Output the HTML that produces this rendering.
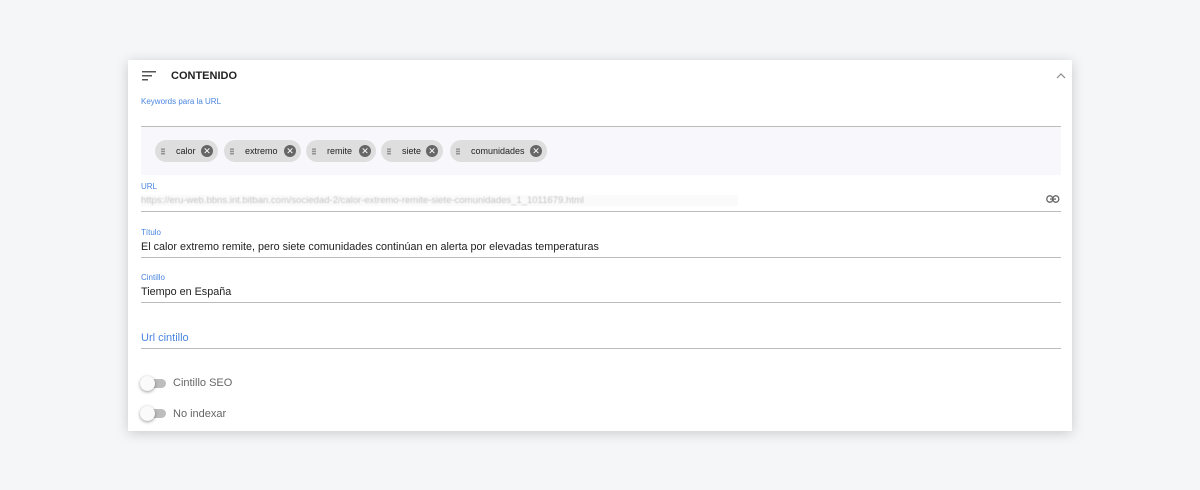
<!DOCTYPE html><html><head><style>
body{margin:0;width:1200px;height:490px;background:#f5f6f8;font-family:"Liberation Sans",sans-serif;position:relative;overflow:hidden}
.card{position:absolute;left:128px;top:60px;width:944px;height:371px;background:#fff;box-shadow:0 2px 12px rgba(0,0,0,.18)}
.a{position:absolute}
.lbl{font-size:8px;color:#4a86e0}
.line{position:absolute;left:13px;width:920px;height:1px;background:#bbb}
.val{font-size:10.8px;color:#222}
.chip{position:absolute;top:80px;height:22px;border-radius:11px;background:#dedede;font-size:9px;color:#222;line-height:22px}
.chip .d{position:absolute;left:6px;top:8px;width:4px;height:7px;background:radial-gradient(circle,#888 0.8px,transparent 1px) 0 0/2px 2.3px}
.chip .x{position:absolute;right:5px;top:5px;width:12px;height:12px;border-radius:50%;background:#666;color:#fff;font-size:9px;line-height:12px;text-align:center}
.tg{position:absolute;left:14px;width:24px;height:9px;border-radius:5px;background:#bdbdbd}
.tg::after{content:"";position:absolute;left:-2px;top:-3px;width:15px;height:15px;border-radius:50%;background:#fafafa;box-shadow:0 1px 3px rgba(0,0,0,.4)}
.tl{position:absolute;left:45px;font-size:11px;color:#666}
</style></head><body>
<div class="card">
<svg class="a" style="left:14px;top:11px" width="14" height="10"><rect x="0" y="0" width="14" height="1.5" fill="#555"/><rect x="0" y="4" width="10" height="1.5" fill="#555"/><rect x="0" y="8" width="6" height="1.5" fill="#555"/></svg>
<div class="a" style="left:43px;top:10px;font-size:11px;font-weight:bold;color:#222">CONTENIDO</div>
<svg class="a" style="left:928px;top:13px" width="10" height="6"><path d="M1 5L5 1L9 5" stroke="#888" stroke-width="1.2" fill="none"/></svg>
<div class="a lbl" style="left:13px;top:37px">Keywords para la URL</div>
<div class="line" style="top:66px"></div>
<div class="a" style="left:13px;top:67px;width:920px;height:48px;background:#f8f8fc"></div>
<div class="chip" style="left:27px;width:63px"><span class="d"></span><span style="margin-left:21px">calor</span><span class="x">✕</span></div>
<div class="chip" style="left:96px;width:77px"><span class="d"></span><span style="margin-left:21px">extremo</span><span class="x">✕</span></div>
<div class="chip" style="left:178px;width:70px"><span class="d"></span><span style="margin-left:21px">remite</span><span class="x">✕</span></div>
<div class="chip" style="left:253px;width:62px"><span class="d"></span><span style="margin-left:21px">siete</span><span class="x">✕</span></div>
<div class="chip" style="left:322px;width:97px"><span class="d"></span><span style="margin-left:21px">comunidades</span><span class="x">✕</span></div>
<div class="a lbl" style="left:13px;top:122px">URL</div>
<div class="a" style="left:13px;top:135px;font-size:9.5px;color:#c4c4c4;filter:blur(0.6px);background:#fafafa;width:597px">https://eru-web.bbns.int.bitban.com/sociedad-2/calor-extremo-remite-siete-comunidades_1_1011679.html</div>
<svg class="a" style="left:918px;top:135px" width="14" height="9"><rect x="0.8" y="0.8" width="6" height="6.5" rx="3.2" stroke="#666" stroke-width="1.3" fill="none"/><rect x="6.8" y="0.8" width="6" height="6.5" rx="3.2" stroke="#666" stroke-width="1.3" fill="none"/><rect x="4" y="3.4" width="6" height="1.3" fill="#666"/></svg>
<div class="line" style="top:151px"></div>
<div class="a lbl" style="left:13px;top:168px">Título</div>
<div class="a val" style="left:13px;top:181px">El calor extremo remite, pero siete comunidades continúan en alerta por elevadas temperaturas</div>
<div class="line" style="top:197px"></div>
<div class="a lbl" style="left:13px;top:213px">Cintillo</div>
<div class="a val" style="left:13px;top:226px">Tiempo en España</div>
<div class="line" style="top:242px"></div>
<div class="a" style="left:13px;top:272px;font-size:11px;color:#4a86e0">Url cintillo</div>
<div class="line" style="top:288px"></div>
<div class="tg" style="top:319px"></div><div class="tl" style="top:317px">Cintillo SEO</div>
<div class="tg" style="top:349px"></div><div class="tl" style="top:348px">No indexar</div>
</div>
</body></html>
